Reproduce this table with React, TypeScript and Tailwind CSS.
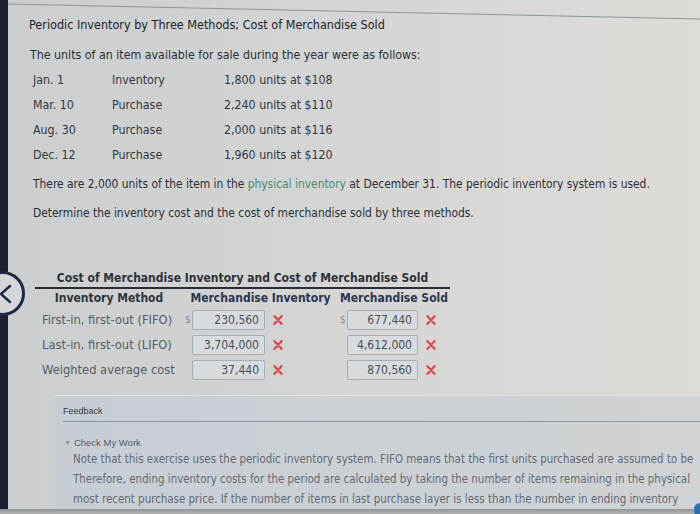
import React from "react";

const purchases = [
  { date: "Jan. 1", kind: "Inventory", units: "1,800 units at $108" },
  { date: "Mar. 10", kind: "Purchase", units: "2,240 units at $110" },
  { date: "Aug. 30", kind: "Purchase", units: "2,000 units at $116" },
  { date: "Dec. 12", kind: "Purchase", units: "1,960 units at $120" },
];

const methods = [
  { label: "First-in, first-out (FIFO)", inv: "230,560", sold: "677,440", dollar: true },
  { label: "Last-in, first-out (LIFO)", inv: "3,704,000", sold: "4,612,000", dollar: false },
  { label: "Weighted average cost", inv: "37,440", sold: "870,560", dollar: false },
];

const Wrong = () => (
  <svg width="10" height="10" viewBox="0 0 10 10" className="shrink-0">
    <path d="M1.5 1.2 L8.5 8.8 M8.5 1.2 L1.5 8.8" stroke="#e2474a" strokeWidth="2.3" strokeLinecap="round" />
  </svg>
);

const Answer = ({ value, dollar, width }: { value: string; dollar: boolean; width: string }) => (
  <div className="flex items-center pl-[2px]">
    <span className="w-[7px] text-[10px] leading-none text-[#8a9097]">{dollar ? "$" : ""}</span>
    <div
      className={`${width} flex h-[20px] items-center justify-end rounded-[2px] border border-[#a4adba] bg-[#d8dbdd] pr-[5px] text-[12px] text-[#4a4f56]`}
    >
      {value}
    </div>
    <div className="ml-[8px]">
      <Wrong />
    </div>
  </div>
);

export default function App() {
  return (
    <div className="relative flex h-[514px] w-[700px] flex-col overflow-hidden bg-gradient-to-r from-[#cbcecf] via-[#d4d5d4] to-[#dfdcd7] font-['DejaVu_Sans_Condensed','DejaVu_Sans',sans-serif] text-[#2c3035]">
      <div className="flex flex-1">
        <div className="w-[8px] shrink-0 bg-[#1b1f30]" />

        <div className="flex flex-1 flex-col pl-[21px] pt-[16px]">
          <h1 className="text-[12.5px] leading-[18px] text-[#1e2229]">
            Periodic Inventory by Three Methods; Cost of Merchandise Sold
          </h1>
          <p className="mt-[12px] pl-[1px] text-[12.3px] leading-[18px]">
            The units of an item available for sale during the year were as follows:
          </p>

          <div className="mt-[4px] pl-[4px] text-[12.3px] text-[#33373d]">
            {purchases.map((p) => (
              <div key={p.date} className="grid h-[25px] grid-cols-[79px_112px_auto] items-center">
                <span>{p.date}</span>
                <span>{p.kind}</span>
                <span>{p.units}</span>
              </div>
            ))}
          </div>

          <p className="mt-[7px] pl-[4px] text-[11.9px] leading-[18px]">
            There are 2,000 units of the item in the <span className="text-[#4a8a6c]">physical inventory</span> at December 31. The periodic inventory system is used.
          </p>
          <p className="mt-[11px] pl-[4px] text-[11.9px] leading-[18px]">
            Determine the inventory cost and the cost of merchandise sold by three methods.
          </p>

          {/* results table */}
          <div className="ml-[6px] mt-[47px] w-[415px]">
            <div className="text-center text-[12px] font-bold leading-[18px] text-[#2e3238]">
              Cost of Merchandise Inventory and Cost of Merchandise Sold
            </div>
            <div className="h-[2px] bg-[#2a2d33]" />
            <div className="grid grid-cols-[148px_155px_112px] text-[12px] font-bold leading-[18px]">
              <span className="text-center text-[#30343a]">Inventory Method</span>
              <span className="text-center text-[#2b3650]">Merchandise Inventory</span>
              <span className="text-center text-[#2b3650]">Merchandise Sold</span>
            </div>
            {methods.map((m) => (
              <div key={m.label} className="grid h-[25px] grid-cols-[148px_155px_112px] items-center">
                <span className="pl-[7px] text-[12.8px] text-[#575c63]">{m.label}</span>
                <Answer value={m.inv} dollar={m.dollar} width="w-[73px]" />
                <Answer value={m.sold} dollar={m.dollar} width="w-[71px]" />
              </div>
            ))}
          </div>

          {/* feedback */}
          <div className="ml-[26px] mt-[13px] flex-1 overflow-hidden border-t border-[#dfe3e6] bg-[#c3ccd5]/55 pt-[9px]">
            <div className="pl-[8px] font-['Liberation_Sans',sans-serif] text-[9px] leading-[12px] text-[#33373c]">
              Feedback
            </div>
            <div className="ml-[8px] mt-[4px] h-px bg-[#8d959c]" />
            <div className="mt-[15px] flex items-center gap-[3px] pl-[9px] font-['Liberation_Sans',sans-serif] text-[9.5px] leading-[12px] text-[#565c63]">
              <span className="text-[7px] text-[#8a9198]">▼</span>
              Check My Work
            </div>
            <div className="whitespace-nowrap pl-[18px] text-[11.45px] leading-[20px] text-[#646a71]">
              <p>Note that this exercise uses the periodic inventory system. FIFO means that the first units purchased are assumed to be</p>
              <p>Therefore, ending inventory costs for the period are calculated by taking the number of items remaining in the physical</p>
              <p>most recent purchase price. If the number of items in last purchase layer is less than the number in ending inventory</p>
            </div>
          </div>
        </div>
      </div>

      <div className="h-[7px] shrink-0 bg-gradient-to-b from-[#8e9397] to-[#c1c4c5]" />

      {/* back arrow button overlapping the edge */}
      <div className="absolute left-[-20px] top-[271px] h-[45px] w-[45px] rounded-full border-[3px] border-[#1f2946] bg-[#d4d6d7]">
        <svg width="14" height="20" viewBox="0 0 14 20" className="absolute left-[15px] top-[10px]">
          <path d="M12 2 L3 10 L12 18" fill="none" stroke="#1f2946" strokeWidth="2.4" strokeLinecap="round" strokeLinejoin="round" />
        </svg>
      </div>

      {/* screen edge seen at the top of the photo */}
      <svg width="700" height="22" className="pointer-events-none absolute left-0 top-0">
        <line x1="8" y1="4" x2="700" y2="19" stroke="#8e9497" strokeWidth="1" />
      </svg>

      <div className="absolute bottom-[-3px] right-[-6px] h-[14px] w-[12px] rounded-full bg-[#2f6db3]" />
    </div>
  );
}
